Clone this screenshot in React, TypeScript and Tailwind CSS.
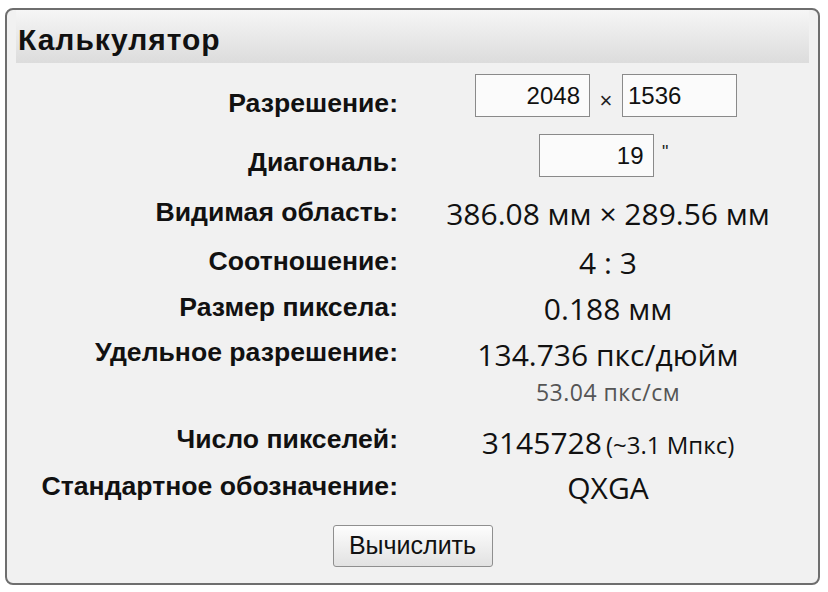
const labelFont = { fontFamily: '"Liberation Sans", Arial, sans-serif' }
const valueFont = { fontFamily: '"Open Sans", sans-serif' }

const rows = [
  { label: "Видимая область:", value: "386.08 мм × 289.56 мм", h: "h-[60px]" },
  { label: "Соотношение:", value: "4 : 3", h: "h-[38px]" },
  { label: "Размер пиксела:", value: "0.188 мм", h: "h-[54px]" },
]

const Label = ({ children, className = "" }: { children: React.ReactNode; className?: string }) => (
  <div
    className={`w-[391px] shrink-0 text-right text-[26.6px] font-bold text-[#111] ${className}`}
    style={labelFont}>
    {children}
  </div>
)

const App = () => {
  return (
    <div className="w-[828px] h-[592px] bg-white pt-2 pl-[5px]">
      <div className="w-[815px] h-[577px] rounded-[8px] border-2 border-[#6e6e6e] bg-[#f1f1f1] flex flex-col">
        <div className="mx-[9px] h-[53px] bg-gradient-to-b from-[#f6f6f6] to-[#dcdcdc] flex items-center pt-[6px]">
          <h1
            className="pl-[2px] text-[30px] tracking-[1px] font-bold text-[#111] leading-none"
            style={labelFont}>
            Калькулятор
          </h1>
        </div>

        <div className="flex h-[65px] items-center">
          <Label className="mt-[17px]">Разрешение:</Label>
          <div className="flex-1 flex items-center justify-center pr-[4px]">
            <input
              readOnly
              value="2048"
              className="w-[115px] h-[43px] border border-[#8a8a8a] bg-[#fbfbfb] text-right pr-[9px] text-[24px] text-[#111] outline-none"
              style={labelFont}
            />
            <span className="w-[32px] text-center text-[22px] text-[#222] mt-[10px]" style={labelFont}>
              ×
            </span>
            <input
              readOnly
              value="1536"
              className="w-[115px] h-[43px] border border-[#8a8a8a] bg-[#fbfbfb] text-left pl-[5px] text-[24px] text-[#111] outline-none"
              style={labelFont}
            />
          </div>
        </div>

        <div className="flex h-[55px] items-center">
          <Label className="mt-[15px]">Диагональ:</Label>
          <div className="flex-1 flex items-center justify-center pr-[9px]">
            <input
              readOnly
              value="19"
              className="w-[115px] h-[43px] border border-[#8a8a8a] bg-[#fbfbfb] text-right pr-[9px] text-[24px] text-[#111] outline-none"
              style={labelFont}
            />
            <span className="w-[15px] text-right text-[18px] text-[#222] -mt-[6px]" style={labelFont}>
              "
            </span>
          </div>
        </div>

        {rows.map((r) => (
          <div key={r.label} className={`flex items-center ${r.h}`}>
            <Label>{r.label}</Label>
            <div className="flex-1 text-center text-[30px] text-[#111]" style={valueFont}>
              {r.value}
            </div>
          </div>
        ))}

        <div className="flex items-start h-[74px]">
          <Label className="leading-[34px]">Удельное разрешение:</Label>
          <div className="flex-1 flex flex-col items-center text-[#111]" style={valueFont}>
            <div className="text-[30px] leading-[40px]">134.736 пкс/дюйм</div>
            <div className="text-[23px] tracking-[0.5px] leading-[34px] text-[#555]">53.04 пкс/см</div>
          </div>
        </div>

        <div className="flex items-center h-[62px]">
          <Label>Число пикселей:</Label>
          <div className="flex-1 text-center text-[#111] mt-[4px]" style={valueFont}>
            <span className="text-[30px]">3145728</span>{" "}
            <span className="text-[24px]">(~3.1 Мпкс)</span>
          </div>
        </div>

        <div className="flex items-center h-[32px]">
          <Label>Стандартное обозначение:</Label>
          <div className="flex-1 text-center text-[30px] text-[#111]" style={valueFont}>
            QXGA
          </div>
        </div>

        <div className="flex justify-center mt-[22px]">
          <button
            className="w-[160px] h-[42px] rounded-[3px] border border-[#8f8f8f] bg-gradient-to-b from-[#fdfdfd] to-[#e2e2e2] text-[25px] text-[#111]"
            style={labelFont}>
            Вычислить
          </button>
        </div>
      </div>
    </div>
  )
}

export default App
